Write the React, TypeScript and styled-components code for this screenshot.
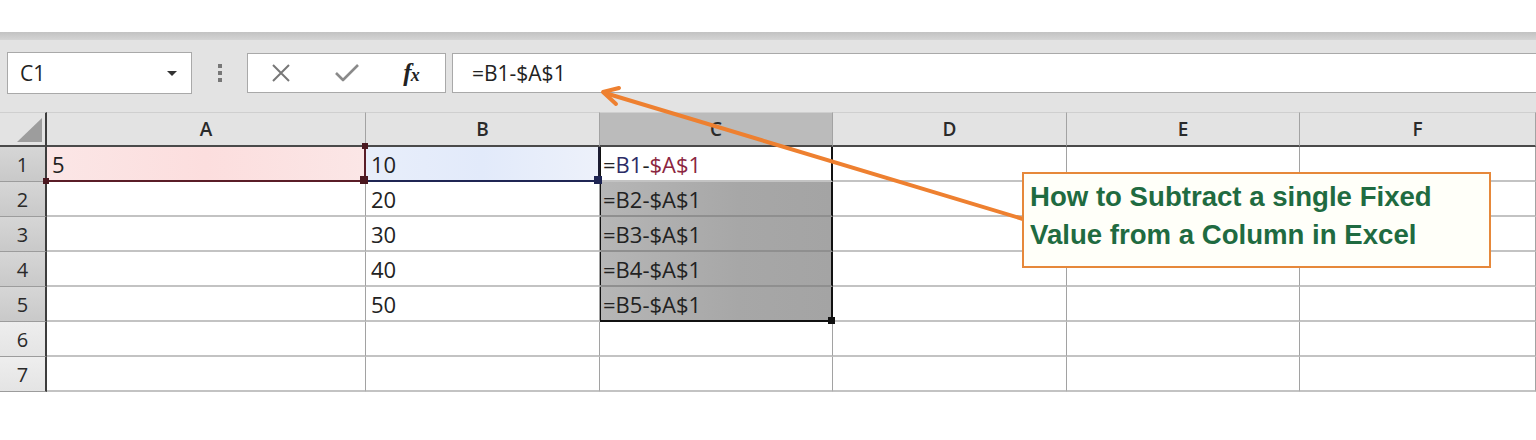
import styled, { createGlobalStyle, css } from "styled-components";

const GlobalStyle = createGlobalStyle`
  html, body {
    margin: 0;
    padding: 0;
    background: #fff;
  }
  body {
    font-family: "Open Sans", "Liberation Sans", sans-serif;
  }
`;

const Page = styled.div`
  position: relative;
  width: 1536px;
  height: 440px;
  overflow: hidden;
  background: #fff;
  display: flex;
  flex-direction: column;
`;

const TopGap = styled.div`
  flex: none;
  height: 32px;
`;

const ToolbarEdge = styled.div`
  flex: none;
  height: 8px;
  background: linear-gradient(#c2c2c2, #d4d4d4);
`;

const FormulaBar = styled.div`
  flex: none;
  height: 72px;
  box-sizing: border-box;
  padding: 0 0 6px 7px;
  background: #e3e3e3;
  display: flex;
  align-items: center;
`;

const NameBox = styled.div`
  width: 185px;
  height: 42px;
  box-sizing: border-box;
  border: 1px solid #a9a9a9;
  background: #fff;
  display: flex;
  align-items: center;
  justify-content: space-between;
  padding: 0 14px 0 12px;
  font-size: 21px;
  color: #222;
`;

const DropArrow = styled.span`
  width: 0;
  height: 0;
  border-left: 5px solid transparent;
  border-right: 5px solid transparent;
  border-top: 5px solid #333;
`;

const Grip = styled.div`
  width: 55px;
  display: flex;
  flex-direction: column;
  align-items: center;
  gap: 3px;
`;

const GripDot = styled.span`
  width: 4px;
  height: 4px;
  background: #777;
`;

const ButtonGroup = styled.div`
  width: 199px;
  height: 40px;
  box-sizing: border-box;
  border: 1px solid #a9a9a9;
  background: #fff;
  display: grid;
  grid-template-columns: 66px 66px 66px;
  align-items: center;
  justify-items: center;
`;

const Fx = styled.span`
  font-family: "Liberation Serif", "DejaVu Serif", serif;
  font-style: italic;
  font-weight: bold;
  font-size: 25px;
  color: #222;
  margin-right: 4px;
  letter-spacing: -1px;
  small {
    font-size: 18px;
  }
`;

const FormulaInput = styled.div`
  flex: 1;
  height: 40px;
  margin-left: 6px;
  box-sizing: border-box;
  border: 1px solid #a9a9a9;
  border-right: none;
  background: #fff;
  display: flex;
  align-items: center;
  padding-left: 19px;
  font-size: 21px;
  color: #222;
`;

const Sheet = styled.div`
  flex: none;
  display: grid;
  grid-template-columns: 47px 319px 234px 233px 234px 233px 236px;
  grid-template-rows: 35px repeat(7, 35px);
  background: #fff;
`;

const Corner = styled.div`
  box-sizing: border-box;
  background: #e3e3e3;
  border-top: 1px solid #cfcfcf;
  border-right: 2px solid #3d3d3d;
  border-bottom: 2px solid #4a4a4a;
  display: flex;
  align-items: flex-end;
  justify-content: flex-end;
  padding: 0 3px 3px 0;
`;

const CornerTriangle = styled.span`
  width: 25px;
  height: 24px;
  background: #9d9d9d;
  clip-path: polygon(100% 0, 100% 100%, 0 100%);
`;

const ColHeader = styled.div<{ $active?: boolean }>`
  box-sizing: border-box;
  border-top: 1px solid #cfcfcf;
  border-right: 1px solid #a3a3a3;
  border-bottom: 2px solid #4a4a4a;
  background: ${(p) => (p.$active ? "#bbbbbb" : "#e3e3e3")};
  display: flex;
  align-items: center;
  justify-content: center;
  font-size: 19px;
  font-weight: 600;
  color: #2a2a2a;
`;

const RowHeader = styled.div<{ $active?: boolean }>`
  box-sizing: border-box;
  border-right: 2px solid #3d3d3d;
  border-bottom: 1px solid #9c9c9c;
  background: ${(p) =>
    p.$active ? "linear-gradient(#d6d6d6, #c9c9c9)" : "linear-gradient(#eeeeee, #e4e4e4)"};
  display: flex;
  align-items: center;
  justify-content: center;
  font-size: 20px;
  font-weight: 500;
  color: #2a2a2a;
`;

type Tone = "plain" | "refA" | "refB" | "sel";

const Cell = styled.div<{ $tone?: Tone; $inRange?: boolean; $last?: boolean }>`
  position: relative;
  box-sizing: border-box;
  border-right: 1px solid #a2a2a2;
  border-bottom: 2px solid #c3c3c3;
  display: flex;
  align-items: center;
  padding-left: 5px;
  font-size: 22px;
  color: #222;
  white-space: nowrap;

  ${(p) =>
    p.$tone === "refA" &&
    css`
      background: linear-gradient(90deg, #fbe6e6, #fcdede 50%, #fbe6e6);
      border-right: 2px solid #5a1d27;
      border-bottom: 2px solid #5a1d27;
    `}
  ${(p) =>
    p.$tone === "refB" &&
    css`
      background: linear-gradient(90deg, #e8eefa, #e2eafa 50%, #edf1fa);
      border-right: 2px solid #1d1d33;
      border-bottom: 2px solid #1f2553;
    `}
  ${(p) =>
    p.$tone === "sel" &&
    css`
      background: linear-gradient(90deg, #b6b6b6, #a7a7a7 60%, #a4a4a4);
      border-bottom-color: #8f8f8f;
    `}
  ${(p) =>
    p.$inRange &&
    css`
      padding-left: 3px;
      border-right: 2px solid #111;
      box-shadow: inset 1px 0 0 #111;
    `}
  ${(p) =>
    p.$last &&
    css`
      border-bottom: 2px solid #111;
    `}
`;

const Handle = styled.span<{ $color: string; $x: "left" | "right"; $y: "top" | "bottom"; $size?: number }>`
  position: absolute;
  width: ${(p) => p.$size ?? 6}px;
  height: ${(p) => p.$size ?? 6}px;
  background: ${(p) => p.$color};
  ${(p) => (p.$x === "left" ? "left: -4px;" : "right: -4px;")}
  ${(p) => (p.$y === "top" ? "top: -4px;" : "bottom: -4px;")}
  z-index: 2;
`;

const RefB = styled.span`
  color: #2b2c66;
`;

const RefA = styled.span`
  color: #8b2540;
`;

const Overlay = styled.svg`
  position: absolute;
  left: 0;
  top: 0;
  pointer-events: none;
  z-index: 5;
`;

const Callout = styled.div`
  position: absolute;
  left: 1022px;
  top: 172px;
  width: 469px;
  height: 96px;
  box-sizing: border-box;
  border: 2px solid #e6883a;
  background: #fffff9;
  padding: 4px 0 0 6px;
  font-family: "Liberation Sans", Arial, sans-serif;
  font-weight: bold;
  font-size: 27.6px;
  line-height: 38px;
  color: #1f6b41;
  z-index: 6;
`;

const columns = ["A", "B", "C", "D", "E", "F"];

function CancelIcon() {
  return (
    <svg width="22" height="22" viewBox="0 0 22 22">
      <path d="M3 3 L19 19 M19 3 L3 19" stroke="#777" strokeWidth="2" fill="none" />
    </svg>
  );
}

function EnterIcon() {
  return (
    <svg width="26" height="22" viewBox="0 0 26 22">
      <path d="M2 11 L9 18 L24 3" stroke="#8a8a8a" strokeWidth="2.6" fill="none" strokeLinejoin="round" />
    </svg>
  );
}

function Row({ n }: { n: number }) {
  const active = n <= 5;
  const b = n <= 5 ? String(n * 10) : "";
  return (
    <>
      <RowHeader $active={active}>{n}</RowHeader>
      {n === 1 ? (
        <Cell $tone="refA">
          5
          <Handle $color="#4a1820" $x="right" $y="top" />
          <Handle $color="#4a1820" $x="left" $y="bottom" />
          <Handle $color="#4a1820" $x="right" $y="bottom" $size={8} />
        </Cell>
      ) : (
        <Cell />
      )}
      {n === 1 ? (
        <Cell $tone="refB">
          10
          <Handle $color="#1f2553" $x="right" $y="bottom" $size={8} />
        </Cell>
      ) : (
        <Cell>{b}</Cell>
      )}
      {n === 1 ? (
        <Cell $inRange>
          =<RefB>B1</RefB>-<RefA>$A$1</RefA>
        </Cell>
      ) : active ? (
        <Cell $tone="sel" $inRange $last={n === 5}>
          =B{n}-$A$1
          {n === 5 && <Handle $color="#111" $x="right" $y="bottom" $size={7} />}
        </Cell>
      ) : (
        <Cell />
      )}
      <Cell />
      <Cell />
      <Cell />
    </>
  );
}

export default function App() {
  return (
    <Page>
      <GlobalStyle />
      <TopGap />
      <ToolbarEdge />
      <FormulaBar>
        <NameBox>
          C1
          <DropArrow />
        </NameBox>
        <Grip>
          <GripDot />
          <GripDot />
          <GripDot />
        </Grip>
        <ButtonGroup>
          <CancelIcon />
          <EnterIcon />
          <Fx>
            f<small>x</small>
          </Fx>
        </ButtonGroup>
        <FormulaInput>=B1-$A$1</FormulaInput>
      </FormulaBar>
      <Sheet>
        <Corner>
          <CornerTriangle />
        </Corner>
        {columns.map((c) => (
          <ColHeader key={c} $active={c === "C"}>
            {c}
          </ColHeader>
        ))}
        {[1, 2, 3, 4, 5, 6, 7].map((n) => (
          <Row key={n} n={n} />
        ))}
      </Sheet>
      <Overlay width="1536" height="440" viewBox="0 0 1536 440">
        <line x1="1023" y1="219" x2="605" y2="93" stroke="#ee8030" strokeWidth="4" strokeLinecap="round" />
        <path d="M616 104 L603 92 L619 88" stroke="#ee8030" strokeWidth="4" fill="none" strokeLinecap="round" strokeLinejoin="round" />
      </Overlay>
      <Callout>
        How to Subtract a single Fixed
        <br />
        Value from a Column in Excel
      </Callout>
    </Page>
  );
}
